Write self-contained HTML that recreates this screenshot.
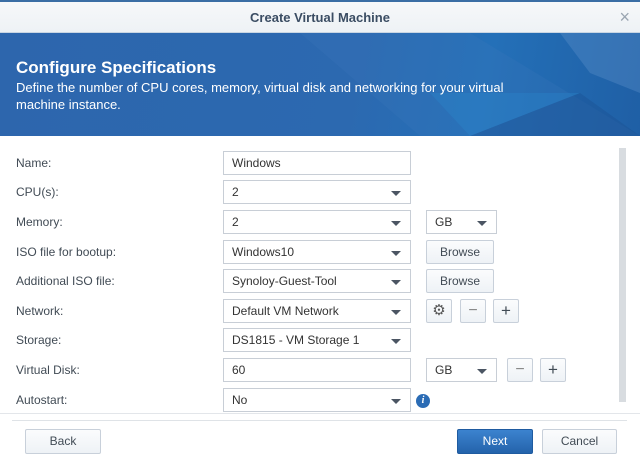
<!DOCTYPE html><html><head><style>
body{margin:0;width:640px;height:461px;overflow:hidden;background:#fff;font-family:"Liberation Sans",sans-serif;font-size:12px;color:#414b55;position:relative}
.a{position:absolute}
.t{top:0;left:0;width:640px;height:33px;background:linear-gradient(#f6f8fa,#eef2f5);border-top:2px solid #3a6ea5;box-sizing:border-box;text-align:center;line-height:31px;font-weight:bold;font-size:13px;color:#3b4d63;border-bottom:1px solid #c9d6e3}
.b{top:33px;left:0;width:640px;height:103px;background:linear-gradient(100deg,#2d66ad 0%,#2c69b0 55%,#2470b8 75%,#1f5fa5 100%);color:#fff;overflow:hidden}
.lab{left:16px;font-size:12px;color:#414b55}
.f{left:223px;width:188px;height:24px;border:1px solid #c8ced6;box-sizing:border-box;padding-left:8px;line-height:22px;font-size:12px;color:#333;background:#fff}
.dd:after{content:"";position:absolute;right:9px;top:10px;border-left:5px solid transparent;border-right:5px solid transparent;border-top:5px solid #4b5563}
.btn{height:24px;border:1px solid #c8d0da;border-radius:2px;background:linear-gradient(#fbfcfd,#eef2f6);box-sizing:border-box;text-align:center;line-height:22px;color:#414b55;font-size:12px}
.sq{width:26px}
</style></head><body>
<div class="a t">Create Virtual Machine<span style="position:absolute;right:10px;top:0;font-weight:normal;color:#9aa5b1;font-size:18px">×</span></div>
<div class="a b">
<svg class="a" style="left:0;top:0" width="640" height="103"><polygon points="300,0 470,0 640,103 420,103" fill="#3a78bd" opacity=".25"/><polygon points="560,0 640,0 640,60 590,40" fill="#5b8fc9" opacity=".4"/><polygon points="470,103 580,60 640,103" fill="#1b4f90" opacity=".4"/><polygon points="430,60 580,60 470,103" fill="#2a8ad0" opacity=".3"/></svg>
<div class="a" style="left:16px;top:25px;font-size:17px;font-weight:bold">Configure Specifications</div>
<div class="a" style="left:16px;top:46px;font-size:13px;line-height:17px;width:600px">Define the number of CPU cores, memory, virtual disk and networking for your virtual<br>machine instance.</div>
</div>
<div class="a" style="left:619px;top:148px;width:7px;height:254px;background:#d8dce0"></div>
<div class="a lab" style="top:156px">Name:</div><div class="a f" style="top:151px">Windows</div>
<div class="a lab" style="top:185px">CPU(s):</div><div class="a f dd" style="top:180px">2</div>
<div class="a lab" style="top:215px">Memory:</div><div class="a f dd" style="top:210px">2</div>
<div class="a f dd" style="top:210px;left:426px;width:71px">GB</div>
<div class="a lab" style="top:245px">ISO file for bootup:</div><div class="a f dd" style="top:240px">Windows10</div>
<div class="a btn" style="left:426px;top:240px;width:68px">Browse</div>
<div class="a lab" style="top:274px">Additional ISO file:</div><div class="a f dd" style="top:269px">Synoloy-Guest-Tool</div>
<div class="a btn" style="left:426px;top:269px;width:68px">Browse</div>
<div class="a lab" style="top:304px">Network:</div><div class="a f dd" style="top:299px">Default VM Network</div>
<div class="a btn sq" style="left:426px;top:299px;font-size:15px;color:#555">⚙</div>
<div class="a btn sq" style="left:460px;top:299px;font-size:16px;color:#888">−</div>
<div class="a btn sq" style="left:493px;top:299px;font-size:17px">+</div>
<div class="a lab" style="top:333px">Storage:</div><div class="a f dd" style="top:328px">DS1815 - VM Storage 1</div>
<div class="a lab" style="top:363px">Virtual Disk:</div><div class="a f" style="top:358px">60</div>
<div class="a f dd" style="top:358px;left:426px;width:71px">GB</div>
<div class="a btn sq" style="left:507px;top:358px;font-size:16px;color:#888">−</div>
<div class="a btn sq" style="left:540px;top:358px;font-size:17px">+</div>
<div class="a lab" style="top:393px">Autostart:</div><div class="a f dd" style="top:388px">No</div>
<div class="a" style="left:416px;top:394px;width:14px;height:14px;border-radius:50%;background:#2b6cb5;color:#fff;font-size:10px;font-weight:bold;font-style:italic;text-align:center;line-height:14px;font-family:'Liberation Serif',serif">i</div>
<div class="a" style="left:0;top:413px;width:640px;height:48px;background:#fff;border-top:1px solid #e3e6ea"></div>
<div class="a" style="left:12px;top:420px;width:615px;height:1px;background:#dfe3e7"></div>
<div class="a btn" style="left:25px;top:429px;width:76px;height:25px;line-height:23px">Back</div>
<div class="a btn" style="left:457px;top:429px;width:76px;height:25px;line-height:23px;background:linear-gradient(#3c83cf,#2463ab);border-color:#1f5ba0;color:#fff">Next</div>
<div class="a btn" style="left:542px;top:429px;width:75px;height:25px;line-height:23px">Cancel</div>
</body></html>
